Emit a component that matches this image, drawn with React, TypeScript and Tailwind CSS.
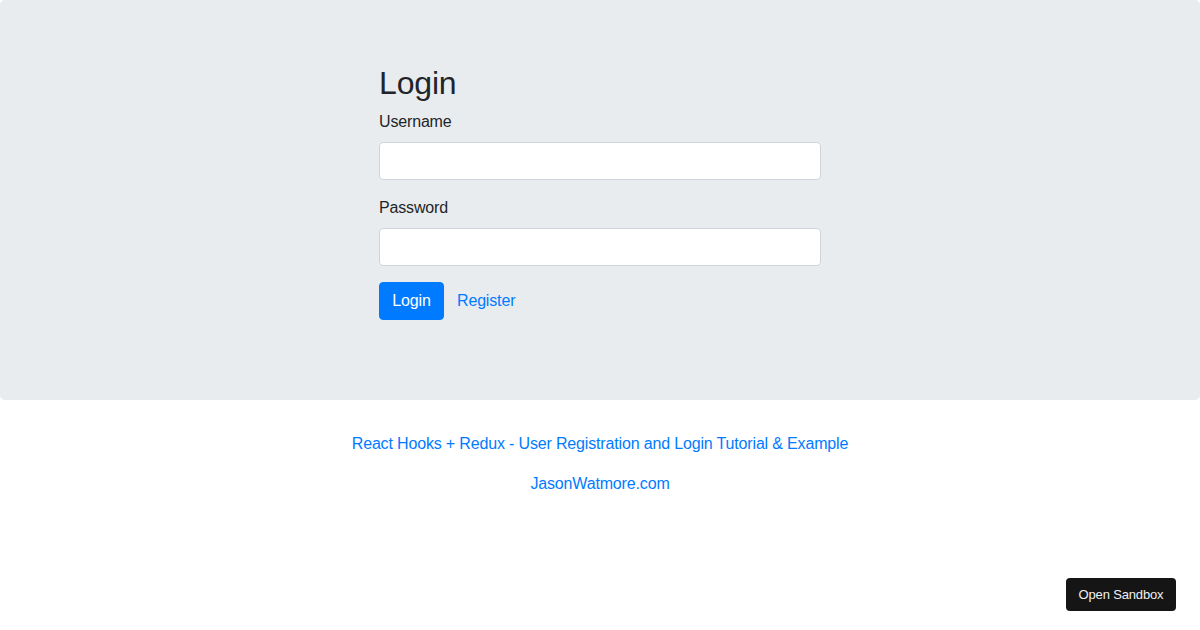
import React from 'react';

export default function App() {
  return (
    <div className="min-h-[630px] bg-white text-[#212529] text-base leading-6 tracking-[-0.01em]" style={{ fontFamily: '"Liberation Sans", Arial, sans-serif' }}>
      <div className="bg-[#e9ecef] rounded-[0.3rem] px-8 py-16 mb-8">
        <div className="w-[442px] mx-auto">
          <h2 className="text-[32px] leading-[1.2] font-normal mb-2">Login</h2>
          <form>
            <div className="mb-4">
              <label className="block mb-2">Username</label>
              <input type="text" className="block w-full h-[38px] px-3 bg-white border border-[#ced4da] rounded-[0.25rem] outline-none" />
            </div>
            <div className="mb-4">
              <label className="block mb-2">Password</label>
              <input type="password" className="block w-full h-[38px] px-3 bg-white border border-[#ced4da] rounded-[0.25rem] outline-none" />
            </div>
            <div className="mb-4 flex items-center h-[38px]">
              <button type="button" className="h-[38px] w-[65px] bg-[#007bff] border border-[#007bff] text-white rounded-[0.25rem]">
                Login
              </button>
              <a href="#" className="ml-[13px] text-[#007bff]">Register</a>
            </div>
          </form>
        </div>
      </div>
      <div className="text-center">
        <p className="mb-4"><a href="#" className="text-[#007bff]">React Hooks + Redux - User Registration and Login Tutorial &amp; Example</a></p>
        <p className="mb-4"><a href="#" className="text-[#007bff]">JasonWatmore.com</a></p>
      </div>
      <button className="fixed right-[24px] bottom-[19px] h-[33px] w-[110px] bg-[#151515] text-[#f0f0f0] text-[13px] rounded-[4px]">
        Open Sandbox
      </button>
    </div>
  );
}
